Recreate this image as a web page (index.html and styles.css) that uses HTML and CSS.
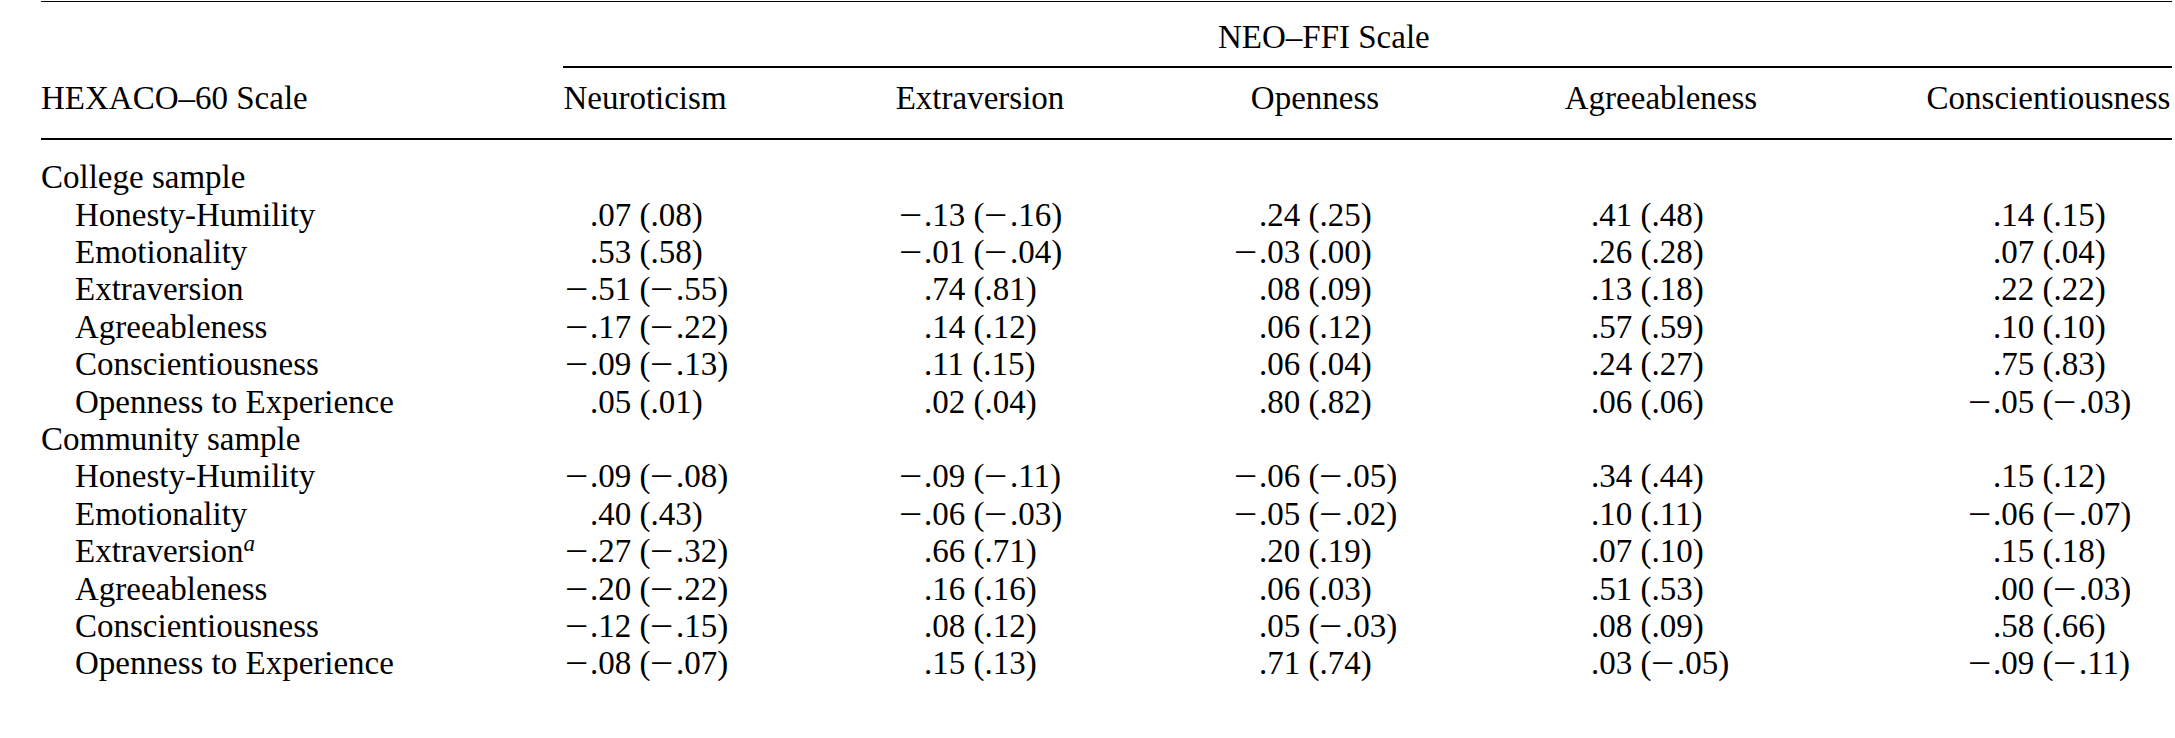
FILE: index.html
```html
<!DOCTYPE html>
<html lang="en">
<head>
<meta charset="utf-8">
<title>HEXACO-60 and NEO-FFI correlations</title>
<link rel="stylesheet" href="styles.css">
</head>
<body>
<div class="page">
  <div class="tbl">
    <div class="head">
      <div class="spanner">NEO–FFI Scale</div>
      <div class="hlabel">HEXACO–60 Scale</div>
      <div class="hcol">Neuroticism</div>
      <div class="hcol">Extraversion</div>
      <div class="hcol">Openness</div>
      <div class="hcol">Agreeableness</div>
      <div class="hcol">Conscientiousness</div>
    </div>
    <div class="body">
      <div class="row"><div class="group">College sample</div></div>
      <div class="row"><div class="lab">Honesty-Humility</div><div class="v"><span class="m"></span>.07 (.08)</div><div class="v"><span class="m">−</span>.13 (<span class="m">−</span>.16)</div><div class="v"><span class="m"></span>.24 (.25)</div><div class="v"><span class="m"></span>.41 (.48)</div><div class="v"><span class="m"></span>.14 (.15)</div></div>
      <div class="row"><div class="lab">Emotionality</div><div class="v"><span class="m"></span>.53 (.58)</div><div class="v"><span class="m">−</span>.01 (<span class="m">−</span>.04)</div><div class="v"><span class="m">−</span>.03 (.00)</div><div class="v"><span class="m"></span>.26 (.28)</div><div class="v"><span class="m"></span>.07 (.04)</div></div>
      <div class="row"><div class="lab">Extraversion</div><div class="v"><span class="m">−</span>.51 (<span class="m">−</span>.55)</div><div class="v"><span class="m"></span>.74 (.81)</div><div class="v"><span class="m"></span>.08 (.09)</div><div class="v"><span class="m"></span>.13 (.18)</div><div class="v"><span class="m"></span>.22 (.22)</div></div>
      <div class="row"><div class="lab">Agreeableness</div><div class="v"><span class="m">−</span>.17 (<span class="m">−</span>.22)</div><div class="v"><span class="m"></span>.14 (.12)</div><div class="v"><span class="m"></span>.06 (.12)</div><div class="v"><span class="m"></span>.57 (.59)</div><div class="v"><span class="m"></span>.10 (.10)</div></div>
      <div class="row"><div class="lab">Conscientiousness</div><div class="v"><span class="m">−</span>.09 (<span class="m">−</span>.13)</div><div class="v"><span class="m"></span>.11 (.15)</div><div class="v"><span class="m"></span>.06 (.04)</div><div class="v"><span class="m"></span>.24 (.27)</div><div class="v"><span class="m"></span>.75 (.83)</div></div>
      <div class="row"><div class="lab">Openness to Experience</div><div class="v"><span class="m"></span>.05 (.01)</div><div class="v"><span class="m"></span>.02 (.04)</div><div class="v"><span class="m"></span>.80 (.82)</div><div class="v"><span class="m"></span>.06 (.06)</div><div class="v"><span class="m">−</span>.05 (<span class="m">−</span>.03)</div></div>
      <div class="row"><div class="group">Community sample</div></div>
      <div class="row"><div class="lab">Honesty-Humility</div><div class="v"><span class="m">−</span>.09 (<span class="m">−</span>.08)</div><div class="v"><span class="m">−</span>.09 (<span class="m">−</span>.11)</div><div class="v"><span class="m">−</span>.06 (<span class="m">−</span>.05)</div><div class="v"><span class="m"></span>.34 (.44)</div><div class="v"><span class="m"></span>.15 (.12)</div></div>
      <div class="row"><div class="lab">Emotionality</div><div class="v"><span class="m"></span>.40 (.43)</div><div class="v"><span class="m">−</span>.06 (<span class="m">−</span>.03)</div><div class="v"><span class="m">−</span>.05 (<span class="m">−</span>.02)</div><div class="v"><span class="m"></span>.10 (.11)</div><div class="v"><span class="m">−</span>.06 (<span class="m">−</span>.07)</div></div>
      <div class="row"><div class="lab">Extraversion<sup class="note">a</sup></div><div class="v"><span class="m">−</span>.27 (<span class="m">−</span>.32)</div><div class="v"><span class="m"></span>.66 (.71)</div><div class="v"><span class="m"></span>.20 (.19)</div><div class="v"><span class="m"></span>.07 (.10)</div><div class="v"><span class="m"></span>.15 (.18)</div></div>
      <div class="row"><div class="lab">Agreeableness</div><div class="v"><span class="m">−</span>.20 (<span class="m">−</span>.22)</div><div class="v"><span class="m"></span>.16 (.16)</div><div class="v"><span class="m"></span>.06 (.03)</div><div class="v"><span class="m"></span>.51 (.53)</div><div class="v"><span class="m"></span>.00 (<span class="m">−</span>.03)</div></div>
      <div class="row"><div class="lab">Conscientiousness</div><div class="v"><span class="m">−</span>.12 (<span class="m">−</span>.15)</div><div class="v"><span class="m"></span>.08 (.12)</div><div class="v"><span class="m"></span>.05 (<span class="m">−</span>.03)</div><div class="v"><span class="m"></span>.08 (.09)</div><div class="v"><span class="m"></span>.58 (.66)</div></div>
      <div class="row"><div class="lab">Openness to Experience</div><div class="v"><span class="m">−</span>.08 (<span class="m">−</span>.07)</div><div class="v"><span class="m"></span>.15 (.13)</div><div class="v"><span class="m"></span>.71 (.74)</div><div class="v"><span class="m"></span>.03 (<span class="m">−</span>.05)</div><div class="v"><span class="m">−</span>.09 (<span class="m">−</span>.11)</div></div>
    </div>
  </div>
</div>
</body>
</html>
```

FILE: styles.css
```css
html, body {
  margin: 0;
  padding: 0;
  background: #ffffff;
}

body {
  font-family: "Liberation Serif", "Times New Roman", serif;
  font-size: 33px;
  line-height: 37.4px;
  color: #000000;
}

.page {
  padding: 1px 0 0 41px;
}

.tbl {
  width: 2131px;
}

.head,
.row {
  display: grid;
  grid-template-columns: 522px 164px 506px 164px 528px 247px;
}

.head {
  border-top: 1px solid #000;
  border-bottom: 2px solid #000;
}

.spanner {
  grid-column: 2 / -1;
  grid-row: 1;
  padding: 17.15px 0 9.45px 655px;
  border-bottom: 2px solid #000;
  white-space: nowrap;
}

.hlabel,
.hcol {
  grid-row: 2;
  padding: 12.15px 0 20.15px 0;
  white-space: nowrap;
}

.hlabel {
  grid-column: 1;
}

.hcol {
  text-align: center;
}

.body {
  padding-top: 19.45px;
}

.group {
  grid-column: 1 / -1;
  white-space: nowrap;
}

.lab {
  padding-left: 34px;
  white-space: nowrap;
}

.v {
  white-space: nowrap;
}

.row > .v:nth-child(2) { padding-left: 1.5px; }
.row > .v:nth-child(3) { padding-left: 171.5px; }
.row > .v:nth-child(4) { padding-left: 0.5px; }
.row > .v:nth-child(5) { padding-left: 168.5px; }
.row > .v:nth-child(6) { padding-left: 42.5px; }

.m {
  display: inline-block;
  width: 20.4px;
  margin-right: 5.1px;
  transform: scaleX(1.25);
  transform-origin: 0 50%;
}

.note {
  font-style: italic;
  font-size: 23px;
  line-height: 0;
  vertical-align: 11px;
}
```
